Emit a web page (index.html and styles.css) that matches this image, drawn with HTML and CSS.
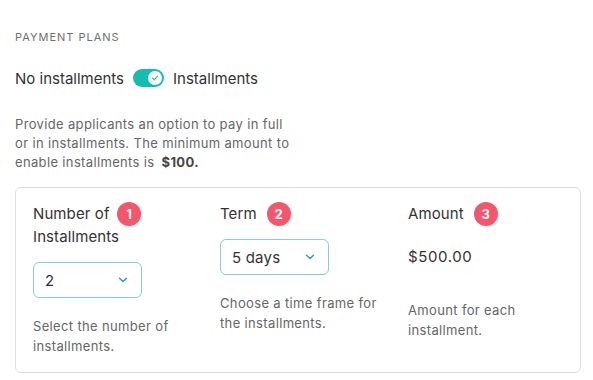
FILE: index.html
```html
<!DOCTYPE html>
<html>
<head>
<meta charset="utf-8">
<link rel="stylesheet" href="styles.css">
</head>
<body>
<div class="page">
  <div class="section-title">PAYMENT PLANS</div>
  <div class="toggle-row">
    <span class="toggle-label">No installments</span>
    <span class="toggle">
      <span class="knob">
        <svg width="8" height="8" viewBox="0 0 8 8"><path d="M1.5 4.2 L3.3 5.8 L6.5 2.2" fill="none" stroke="#1fb5aa" stroke-width="1.1" stroke-linecap="round" stroke-linejoin="round"/></svg>
      </span>
    </span>
    <span class="toggle-label">Installments</span>
  </div>
  <p class="desc">Provide applicants an option to pay in full or in installments. The minimum amount to enable installments is <b class="min">$100.</b></p>
  <div class="card">
    <div class="col">
      <div class="col-head">
        <span class="col-title first">Number of<br>Installments</span>
        <span class="badge">1</span>
      </div>
      <div class="select">
        <span>2</span>
        <svg class="chev" width="10" height="6" viewBox="0 0 10 6"><path d="M1.5 1.2 L5 4.5 L8.5 1.2" fill="none" stroke="#2aa79b" stroke-width="1.5" stroke-linecap="round" stroke-linejoin="round"/></svg>
      </div>
      <p class="help">Select the number of installments.</p>
    </div>
    <div class="col">
      <div class="col-head">
        <span class="col-title">Term</span>
        <span class="badge">2</span>
      </div>
      <div class="select">
        <span>5 days</span>
        <svg class="chev" width="10" height="6" viewBox="0 0 10 6"><path d="M1.5 1.2 L5 4.5 L8.5 1.2" fill="none" stroke="#2aa79b" stroke-width="1.5" stroke-linecap="round" stroke-linejoin="round"/></svg>
      </div>
      <p class="help">Choose a time frame for the installments.</p>
    </div>
    <div class="col">
      <div class="col-head">
        <span class="col-title">Amount</span>
        <span class="badge">3</span>
      </div>
      <div class="amount">$500.00</div>
      <p class="help">Amount for each installment.</p>
    </div>
  </div>
</div>
</body>
</html>
```
FILE: styles.css
```css
* { box-sizing: border-box; }
html, body { margin: 0; padding: 0; background: #fff; }
body { font-family: "Inter", "Noto Sans", sans-serif; color: #333; }
.page { padding: 30px 12px 0 15px; width: 593px; }
.section-title {
  font-size: 11px; letter-spacing: 1px; color: #707070; line-height: 14px;
}
.toggle-row {
  display: flex; align-items: center; gap: 9px; margin-top: 23px; height: 22px;
}
.toggle-label { font-size: 15px; color: #333; letter-spacing: 0; }
.toggle {
  width: 31px; height: 18px; border-radius: 9px; background: #17bcb0;
  display: flex; align-items: center; justify-content: flex-end; padding-right: 2px;
}
.knob {
  width: 14px; height: 14px; border-radius: 50%; background: #fff;
  display: flex; align-items: center; justify-content: center;
}
.knob svg { display: block; }
.desc {
  margin: 26px 0 0; width: 278px; font-size: 13px; line-height: 19px; color: #666;
  letter-spacing: 0.35px;
}
.desc .min { color: #444; font-weight: 700; display: inline-block; margin-left: 3px; }
.card {
  margin-top: 15px; width: 566px; height: 186px; border: 1px solid #e0e0e3; border-radius: 6px;
  display: grid; grid-template-columns: 187px 188px 1fr; padding: 14px 0 0 17px;
}
.col { display: flex; flex-direction: column; }
.col-head { display: flex; align-items: flex-start; gap: 12px; height: 47px; }
.col-title { font-size: 15px; line-height: 23px; color: #333; letter-spacing: 0.1px; white-space: nowrap; }
.col-title.first { width: 72px; }
.col:nth-child(2) .col-head, .col:nth-child(3) .col-head { height: 24px; }
.badge {
  width: 24px; height: 24px; border-radius: 50%; background: #f5566b; color: #fff;
  font-size: 13px; font-weight: 700; display: flex; align-items: center; justify-content: center;
  margin-top: 0; flex: none;
}
.col:nth-child(2) .badge { margin-left: -2px; }
.col:nth-child(3) .badge { margin-left: -2px; }
.select {
  margin-top: 13px; width: 109px; height: 36px; border: 1px solid #86d0c8; border-radius: 6px;
  display: flex; align-items: center; justify-content: space-between; padding: 0 13px 0 11px;
  font-size: 15px; color: #333; letter-spacing: 0.2px;
}
.chev { display: block; }
.amount { margin-top: 19px; font-size: 15px; color: #333; line-height: 24px; letter-spacing: 0.6px; }
.help {
  margin: 18px 0 0; font-size: 13px; line-height: 20px; color: #666; width: 165px;
  letter-spacing: 0.35px;
}
.col:nth-child(1) .help { margin-top: 18px; width: 150px; }
.col:nth-child(3) .help { margin-top: 31px; width: 130px; }
```
